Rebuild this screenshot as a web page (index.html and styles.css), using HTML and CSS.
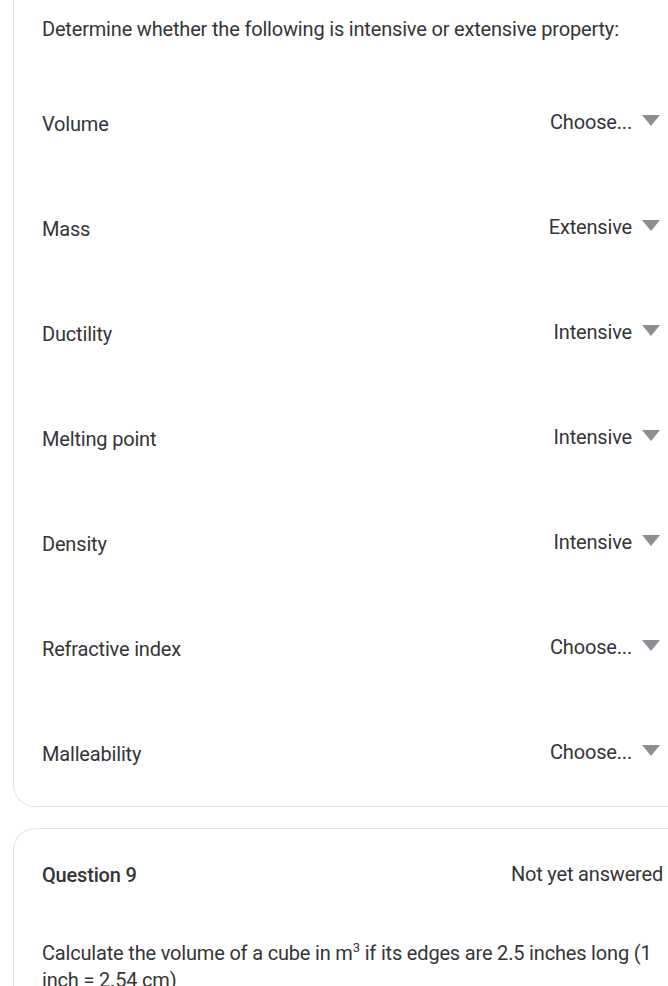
FILE: index.html
```html
<!DOCTYPE html>
<html>
<head>
<meta charset="utf-8">
<link rel="stylesheet" href="styles.css">
</head>
<body>
<div class="page">
  <section class="card card-first">
    <p class="prompt">Determine whether the following is intensive or extensive property:</p>
    <div class="rows">
      <div class="row"><span class="label">Volume</span><span class="select">Choose...<svg class="caret" viewBox="0 0 18 11" width="18" height="11"><path d="M0 0H18L9 11Z"/></svg></span></div>
      <div class="row"><span class="label">Mass</span><span class="select">Extensive<svg class="caret" viewBox="0 0 18 11" width="18" height="11"><path d="M0 0H18L9 11Z"/></svg></span></div>
      <div class="row"><span class="label">Ductility</span><span class="select">Intensive<svg class="caret" viewBox="0 0 18 11" width="18" height="11"><path d="M0 0H18L9 11Z"/></svg></span></div>
      <div class="row"><span class="label">Melting point</span><span class="select">Intensive<svg class="caret" viewBox="0 0 18 11" width="18" height="11"><path d="M0 0H18L9 11Z"/></svg></span></div>
      <div class="row"><span class="label">Density</span><span class="select">Intensive<svg class="caret" viewBox="0 0 18 11" width="18" height="11"><path d="M0 0H18L9 11Z"/></svg></span></div>
      <div class="row"><span class="label">Refractive index</span><span class="select">Choose...<svg class="caret" viewBox="0 0 18 11" width="18" height="11"><path d="M0 0H18L9 11Z"/></svg></span></div>
      <div class="row"><span class="label">Malleability</span><span class="select">Choose...<svg class="caret" viewBox="0 0 18 11" width="18" height="11"><path d="M0 0H18L9 11Z"/></svg></span></div>
    </div>
  </section>
  <section class="card card-second">
    <div class="qhead">
      <h3 class="qtitle">Question 9</h3>
      <span class="qstate">Not yet answered</span>
    </div>
    <p class="qtext">Calculate the volume of a cube in m<sup>3</sup> if its edges are 2.5 inches long (1 inch = 2.54 cm)</p>
  </section>
</div>
</body>
</html>
```

FILE: styles.css
```css
html, body {
  margin: 0;
  padding: 0;
  background: #ffffff;
  overflow: hidden;
}
body {
  font-family: Roboto, "Liberation Sans", sans-serif;
  color: #333538;
  font-size: 20px;
  letter-spacing: -0.18px;
}
.page {
  padding-left: 13px;
  width: 663px;
}
.card {
  background: #fff;
  border: 1px solid #e3e4e6;
  border-right: none;
  border-radius: 22px 0 0 22px;
  padding: 0 13px 0 28px;
}
.card-first {
  margin-top: -60px;
  padding-top: 74px;
}
.prompt {
  margin: 0;
  line-height: 28px;
}
.rows {
  margin-top: 28px;
}
.row {
  height: 105px;
  display: flex;
  align-items: center;
  justify-content: space-between;
}
.label {
  line-height: 28px;
}
.select {
  display: flex;
  align-items: center;
  line-height: 28px;
  margin-bottom: 4px;
  margin-right: 3px;
}
.caret {
  margin-left: 10px;
  fill: #8b8e92;
  margin-top: -2px;
}
.card-second {
  margin-top: 21px;
  padding-top: 32px;
  padding-bottom: 40px;
}
.qhead {
  display: flex;
  justify-content: space-between;
  align-items: center;
}
.qtitle {
  margin: 0;
  font-size: 20px;
  font-weight: 500;
  line-height: 28px;
}
.qstate {
  line-height: 28px;
  margin-top: -2px;
}
.qtext {
  margin: 51px 0 0 0;
  line-height: 27px;
}
.qtext sup {
  font-size: 13px;
  line-height: 0;
  vertical-align: 8px;
}
```
